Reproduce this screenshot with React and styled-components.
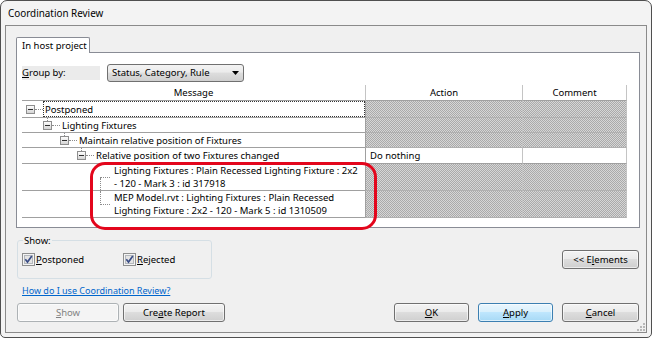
import React from 'react'
import styled, { createGlobalStyle } from 'styled-components'

const GlobalStyle = createGlobalStyle`
  html, body { margin: 0; padding: 0; background: #fff; }
  body { font-family: "Noto Sans", "Open Sans", sans-serif; font-size: 9.5px; color: #000; }
  * { box-sizing: border-box; }
`

const hatch = `repeating-conic-gradient(#aaaaaa 0% 25%, #d6d6d6 0% 50%) 0 0 / 2px 2px`
const btnFace = `linear-gradient(#f3f3f3, #ebebeb 45%, #dddddd 50%, #cfcfcf)`

const Window = styled.div`
  position: relative;
  width: 652px;
  height: 338px;
  border: 1px solid #4f4f4f;
  border-radius: 7px 7px 5px 5px;
  background: #f3f3f3;
  display: flex;
  flex-direction: column;
  padding: 0 4px 4px;
  overflow: hidden;
`

const TitleBar = styled.div`
  height: 24px;
  display: flex;
  align-items: center;
  padding-left: 3px;
  font-size: 9.9px;
`

const Client = styled.div`
  position: relative;
  flex: 1;
  border: 1px solid #8a8a8a;
  background: #f0f0f0;
  padding: 11px 6px 0 10px;
  display: flex;
  flex-direction: column;
`

const TabStrip = styled.div`
  display: flex;
  height: 15px;
`

const Tab = styled.div`
  position: relative;
  z-index: 1;
  width: 74px;
  height: 16px;
  border: 1px solid #898c95;
  border-bottom: none;
  border-radius: 2px 2px 0 0;
  background: #fff;
  padding-left: 5px;
  display: flex;
  align-items: center;
`

const Panel = styled.div`
  width: 624px;
  height: 176px;
  border: 1px solid #898c95;
  background: #fff;
  padding: 11px 0 0 5px;
`

const GroupRow = styled.div`
  display: flex;
  align-items: center;
  height: 17px;
`

const GroupLabel = styled.div`
  width: 78px;
  height: 14px;
  background: #ebebeb;
  display: flex;
  align-items: center;
`

const Select = styled.div`
  margin-left: 7px;
  width: 137px;
  height: 18px;
  border: 1px solid #707070;
  border-radius: 3px;
  background: ${btnFace};
  display: flex;
  align-items: center;
  justify-content: space-between;
  padding: 0 4px;
`

const Key = styled.span`
  text-decoration: underline;
`

const Table = styled.div`
  margin-top: 4px;
  width: 605px;
  display: grid;
  grid-template-columns: 343px 157px 105px;
`

const HeadCell = styled.div`
  height: 16px;
  display: flex;
  align-items: center;
  justify-content: center;
  border-bottom: 1px solid #a0a0a0;
  border-left: ${p => (p.$first ? 'none' : '1px solid #c4c4c4')};
  border-right: ${p => (p.$last ? '1px solid #c4c4c4' : 'none')};
`

const MsgCell = styled.div`
  height: ${p => p.$h}px;
  border-bottom: 1px solid #a0a0a0;
  display: flex;
  align-items: stretch;
  padding-left: ${p => p.$pad}px;
`

const DataCell = styled.div`
  height: ${p => p.$h}px;
  border-left: 1px solid ${p => (p.$first ? '#a0a0a0' : '#c4c4c4')};
  border-right: ${p => (p.$last ? '1px solid #c4c4c4' : 'none')};
  border-bottom: 1px solid ${p => (p.$hatch ? '#b0b0b0' : '#a0a0a0')};
  background: ${p => (p.$hatch ? hatch : '#fff')};
  display: flex;
  align-items: center;
  padding-left: 4px;
`

const NodeCol = styled.div`
  width: 9px;
  display: flex;
  flex-direction: column;
  align-items: center;
`

const Stub = styled.div`
  flex: 1;
  border-left: ${p => (p.$on ? '1px dotted #8c8c8c' : 'none')};
`

const ExpBox = styled.div`
  width: 9px;
  height: 9px;
  border: 1px solid #8e8e8e;
  background: linear-gradient(#fdfdfd, #d4d4d4);
  display: flex;
  align-items: center;
  justify-content: center;
  &::after {
    content: '';
    width: 5px;
    height: 1px;
    background: #2e2e2e;
  }
`

const HLine = styled.div`
  width: ${p => p.$w}px;
  align-self: center;
  border-top: 1px dotted #8c8c8c;
`

const Label = styled.div`
  display: flex;
  align-items: center;
  padding-left: 2px;
  white-space: nowrap;
`

const FocusLabel = styled(Label)`
  flex: 1;
  padding-left: 1px;
  border: 1px dotted #333;
`

const Connector = styled.div`
  width: 10px;
  display: flex;
  flex-direction: column;
`

const Half = styled.div`
  flex: 1;
  border-left: ${p => (p.$on ? '1px dotted #8c8c8c' : 'none')};
  border-bottom: ${p => (p.$mark ? '1px dotted #8c8c8c' : 'none')};
`

const LeafText = styled.div`
  padding-left: 4px;
  line-height: 13px;
  white-space: nowrap;
  align-self: center;
`

const Annotation = styled.div`
  position: absolute;
  left: 89px;
  top: 161px;
  width: 287px;
  height: 68px;
  border: 3px solid #e3061c;
  border-radius: 15px;
  pointer-events: none;
`

const ShowRow = styled.div`
  margin-top: 12px;
  display: flex;
  align-items: center;
  justify-content: space-between;
  padding: 0 1px;
`

const GroupBox = styled.div`
  width: 195px;
  height: 39px;
  border: 1px solid #d5dfe5;
  border-radius: 3px;
  padding-left: 4px;
`

const Legend = styled.div`
  margin-top: -7px;
  margin-left: 1px;
  width: fit-content;
  height: 13px;
  background: #f0f0f0;
  padding: 0 1px;
  display: flex;
  align-items: center;
`

const CheckRow = styled.div`
  margin-top: 6px;
  display: grid;
  grid-template-columns: 101px auto;
`

const CheckItem = styled.div`
  display: flex;
  align-items: center;
  gap: 1px;
  height: 13px;
`

const HelpLink = styled.a`
  margin: 5px 0 0 6px;
  height: 12px;
  display: flex;
  align-items: center;
  color: #0066cc;
  text-decoration: underline;
  width: fit-content;
  font-size: 9px;
`

const ButtonRow = styled.div`
  margin-top: 7px;
  display: flex;
  justify-content: space-between;
  padding: 0 1px;
`

const ButtonGroup = styled.div`
  display: flex;
  gap: ${p => p.$gap}px;
`

const Button = styled.div`
  width: ${p => p.$w}px;
  height: 19px;
  border: 1px solid ${p => (p.$disabled ? '#adb2b5' : p.$default ? '#3c7fb1' : '#707070')};
  border-radius: 3px;
  background: ${p =>
    p.$disabled
      ? '#f4f4f4'
      : p.$default
      ? 'linear-gradient(#eaf6fd, #d9f0fc 45%, #bee6fd 50%, #a7d9f5)'
      : btnFace};
  color: ${p => (p.$disabled ? '#838383' : '#000')};
  display: flex;
  align-items: center;
  justify-content: center;
  box-shadow: inset 0 0 0 1px rgba(255, 255, 255, 0.6);
`

const Grip = styled.svg`
  position: absolute;
  right: 1px;
  bottom: 1px;
`

const CheckBox = () => (
  <svg width="13" height="13" viewBox="0 0 13 13">
    <rect x="0.5" y="0.5" width="12" height="12" fill="#f4f4f4" stroke="#8e8f8f" />
    <rect x="2.5" y="2.5" width="8" height="8" fill="#e4e4e4" stroke="#b4b8bd" />
    <path d="M3.3 6.3 L5.5 9 L9.8 3.1" fill="none" stroke="#3a4d86" strokeWidth="1.7" />
  </svg>
)

const Node = ({ text, stub, focus }) => (
  <>
    <NodeCol>
      <Stub $on={stub} />
      <ExpBox />
      <Stub />
    </NodeCol>
    <HLine $w={8} />
    {focus ? <FocusLabel>{text}</FocusLabel> : <Label>{text}</Label>}
  </>
)

const groups = [
  { level: 0, text: 'Postponed', h: 17, focus: true },
  { level: 1, text: 'Lighting Fixtures', h: 15, stub: true },
  { level: 2, text: 'Maintain relative position of Fixtures', h: 15, stub: true },
  { level: 3, text: 'Relative position of two Fixtures changed', h: 16, stub: true, action: 'Do nothing' },
]

const leaves = [
  {
    lines: ['Lighting Fixtures : Plain Recessed Lighting Fixture : 2x2', '- 120 - Mark 3 : id 317918'],
    down: true,
  },
  {
    lines: ['MEP Model.rvt : Lighting Fixtures : Plain Recessed', 'Lighting Fixture : 2x2 - 120 - Mark 5 : id 1310509'],
    up: true,
  },
]

export default function App() {
  return (
    <>
      <GlobalStyle />
      <Window>
        <TitleBar>Coordination Review</TitleBar>
        <Client>
          <TabStrip>
            <Tab>In host project</Tab>
          </TabStrip>
          <Panel>
            <GroupRow>
              <GroupLabel>
                <span><Key>G</Key>roup by:</span>
              </GroupLabel>
              <Select>
                <span>Status, Category, Rule</span>
                <svg width="7" height="4" viewBox="0 0 7 4">
                  <path d="M0 0 H7 L3.5 4 Z" fill="#000" />
                </svg>
              </Select>
            </GroupRow>
            <Table>
              <HeadCell $first>Message</HeadCell>
              <HeadCell>Action</HeadCell>
              <HeadCell $last>Comment</HeadCell>
              {groups.map(g => (
                <React.Fragment key={g.text}>
                  <MsgCell $h={g.h} $pad={4 + 17 * g.level}>
                    <Node {...g} />
                  </MsgCell>
                  <DataCell $h={g.h} $first $hatch={!g.action}>{g.action}</DataCell>
                  <DataCell $h={g.h} $last $hatch={!g.action} />
                </React.Fragment>
              ))}
              {leaves.map(l => (
                <React.Fragment key={l.lines[0]}>
                  <MsgCell $h={27} $pad={78}>
                    <Connector>
                      <Half $on={l.up} $mark />
                      <Half $on={l.down} />
                    </Connector>
                    <LeafText>
                      {l.lines[0]}
                      <br />
                      {l.lines[1]}
                    </LeafText>
                  </MsgCell>
                  <DataCell $h={27} $first $hatch />
                  <DataCell $h={27} $last $hatch />
                </React.Fragment>
              ))}
            </Table>
          </Panel>
          <ShowRow>
            <GroupBox>
              <Legend>Show:</Legend>
              <CheckRow>
                <CheckItem>
                  <CheckBox />
                  <span><Key>P</Key>ostponed</span>
                </CheckItem>
                <CheckItem>
                  <CheckBox />
                  <span><Key>R</Key>ejected</span>
                </CheckItem>
              </CheckRow>
            </GroupBox>
            <Button $w={77}>
              <span>&lt;&lt; E<Key>l</Key>ements</span>
            </Button>
          </ShowRow>
          <HelpLink>How do I use Coordination Review?</HelpLink>
          <ButtonRow>
            <ButtonGroup $gap={4}>
              <Button $w={102} $disabled>
                <span><Key>S</Key>how</span>
              </Button>
              <Button $w={102}>
                <span>Cre<Key>a</Key>te Report</span>
              </Button>
            </ButtonGroup>
            <ButtonGroup $gap={9}>
              <Button $w={75}>
                <span><Key>O</Key>K</span>
              </Button>
              <Button $w={75} $default>
                <span><Key>A</Key>pply</span>
              </Button>
              <Button $w={77}>
                <span><Key>C</Key>ancel</span>
              </Button>
            </ButtonGroup>
          </ButtonRow>
          <Grip width="8" height="8" viewBox="0 0 8 8">
            {[[6, 0], [6, 3], [3, 3], [6, 6], [3, 6], [0, 6]].map(([x, y]) => (
              <rect key={`${x}-${y}`} x={x} y={y} width="2" height="2" fill="#b8b8b8" />
            ))}
          </Grip>
        </Client>
        <Annotation />
      </Window>
    </>
  )
}
